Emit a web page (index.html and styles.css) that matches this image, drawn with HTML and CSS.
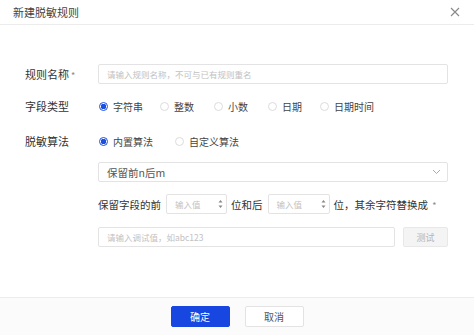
FILE: index.html
```html
<!DOCTYPE html>
<html lang="zh-CN">
<head>
  <meta charset="UTF-8">
  <meta name="viewport" content="width=device-width, initial-scale=1.0">
  <title>新建脱敏规则</title>
  <link rel="stylesheet" href="styles.css">
</head>
<body>
  <div class="dialog">
    <div class="header">
      <span class="title">新建脱敏规则</span>
      <svg class="close" width="10" height="10" viewBox="0 0 10 10"><path d="M1 1L9 9M9 1L1 9" stroke="#888" stroke-width="1.1" fill="none"/></svg>
    </div>

    <!-- form body -->
    <div class="form">
      <div class="row r1">
        <label class="label">规则名称<span class="star">*</span></label>
        <div class="input full"><span class="ph">请输入规则名称，不可与已有规则重名</span></div>
      </div>

      <div class="row r2">
        <label class="label">字段类型</label>
        <div class="radios">
          <span class="radio checked"><i></i>字符串</span>
          <span class="radio"><i></i>整数</span>
          <span class="radio"><i></i>小数</span>
          <span class="radio"><i></i>日期</span>
          <span class="radio"><i></i>日期时间</span>
        </div>
      </div>

      <div class="row r3">
        <label class="label">脱敏算法</label>
        <div class="radios">
          <span class="radio checked"><i></i>内置算法</span>
          <span class="radio"><i></i>自定义算法</span>
        </div>
      </div>

      <div class="row r4 indent">
        <div class="input full select">
          <span class="val">保留前n后m</span>
          <svg width="9" height="6" viewBox="0 0 9 6"><path d="M1 1L4.5 4.5L8 1" stroke="#aaa" stroke-width="1" fill="none"/></svg>
        </div>
      </div>

      <div class="row r5 indent">
        <span class="txt">保留字段的前</span>
        <div class="input num">
          <span class="ph">输入值</span>
          <svg width="5" height="10" viewBox="0 0 5 10"><path d="M0.5 3.5L2.5 1L4.5 3.5Z M0.5 6.5L2.5 9L4.5 6.5Z" fill="#888"/></svg>
        </div>
        <span class="txt">位和后</span>
        <div class="input num">
          <span class="ph">输入值</span>
          <svg width="5" height="10" viewBox="0 0 5 10"><path d="M0.5 3.5L2.5 1L4.5 3.5Z M0.5 6.5L2.5 9L4.5 6.5Z" fill="#888"/></svg>
        </div>
        <span class="txt">位，其余字符替换成 <span class="star">*</span></span>
      </div>

      <div class="row r6 indent">
        <div class="input test"><span class="ph">请输入调试值，如abc123</span></div>
        <button class="btn-test">测试</button>
      </div>
    </div>

    <div class="footer">
      <button class="btn primary">确定</button>
      <button class="btn">取消</button>
    </div>
  </div>
</body>
</html>
```

FILE: styles.css
```css
body {
  margin: 0;
  font-family: "Noto Sans CJK SC", "Noto Sans", sans-serif;
  background: #fff;
  color: #333;
}
.dialog {
  width: 474px;
  height: 335px;
  display: flex;
  flex-direction: column;
}
.header {
  height: 25px;
  padding: 0 14px 0 13px;
  display: flex;
  align-items: center;
  justify-content: space-between;
  border-bottom: 1px solid #ececec;
  box-sizing: border-box;
}
.title { font-size: 11px; color: #444; }
.form {
  flex: 1;
  padding: 39px 26px 0 25px;
}
.row {
  display: flex;
  align-items: center;
  height: 20px;
}
.r2 { margin-top: 12px; }
.r3 { margin-top: 15px; }
.r4 { margin-top: 11px; }
.r5 { margin-top: 12px; }
.r6 { margin-top: 13px; }
.indent { padding-left: 73px; }
.label {
  width: 73px;
  flex-shrink: 0;
  font-size: 11px;
  color: #333;
}
.star { color: #888; margin-left: 2px; font-size: 9px; }
.input {
  height: 20px;
  box-sizing: border-box;
  border: 1px solid #e3e3e3;
  border-radius: 2px;
  display: flex;
  align-items: center;
  padding: 0 8px;
}
.full { flex: 1; }
.ph { font-size: 8.5px; color: #c2c2c2; }
.radios { display: flex; align-items: center; }
.radio {
  display: flex;
  align-items: center;
  font-size: 10px;
  color: #444;
  margin-right: 16px;
}
.radio i {
  width: 9px;
  height: 9px;
  border: 1px solid #dcdcdc;
  border-radius: 50%;
  margin-right: 5px;
  box-sizing: border-box;
  margin-left: 1px;
}
.radio.checked i {
  border: 1px solid #1c4fe0;
  background: radial-gradient(circle, #1c4fe0 0 2.6px, #fff 3px);
}
.r2 .radio:nth-child(2) { margin-right: 19px; }
.r2 .radio:nth-child(3) { margin-right: 19px; }
.r2 .radio:nth-child(4) { margin-right: 17px; }
.r3 .radio:nth-child(1) { margin-right: 21px; }
.select { justify-content: space-between; padding-right: 6px; }
.val { font-size: 10.5px; color: #555; }
.txt { font-size: 10.5px; color: #333; white-space: nowrap; }
.num {
  width: 61px;
  margin: 0 4px 0 4px;
  justify-content: space-between;
  padding-right: 3px;
}
.r5 .txt:first-child { margin-right: 1px; }
.r5 .num:nth-of-type(2) { margin-left: 5px; width: 62px; }
.test { width: 297px; }
.btn-test {
  margin-left: 8px;
  width: 45px;
  height: 20px;
  border: 1px solid #e8e8e8;
  background: #f4f4f4;
  color: #b5b5b5;
  font-size: 9px;
  font-family: inherit;
  border-radius: 2px;
  padding: 0;
}
.footer {
  height: 37px;
  border-top: 1px solid #ececec;
  background: #fbfbfb;
  display: flex;
  align-items: center;
  justify-content: center;
  gap: 15px;
}
.btn {
  width: 59px;
  height: 21px;
  border: 1px solid #e3e3e3;
  background: #fff;
  color: #555;
  font-size: 10px;
  font-family: inherit;
  border-radius: 2px;
  padding: 0;
}
.btn.primary {
  background: #1746e0;
  border-color: #1746e0;
  color: #fff;
}
```
